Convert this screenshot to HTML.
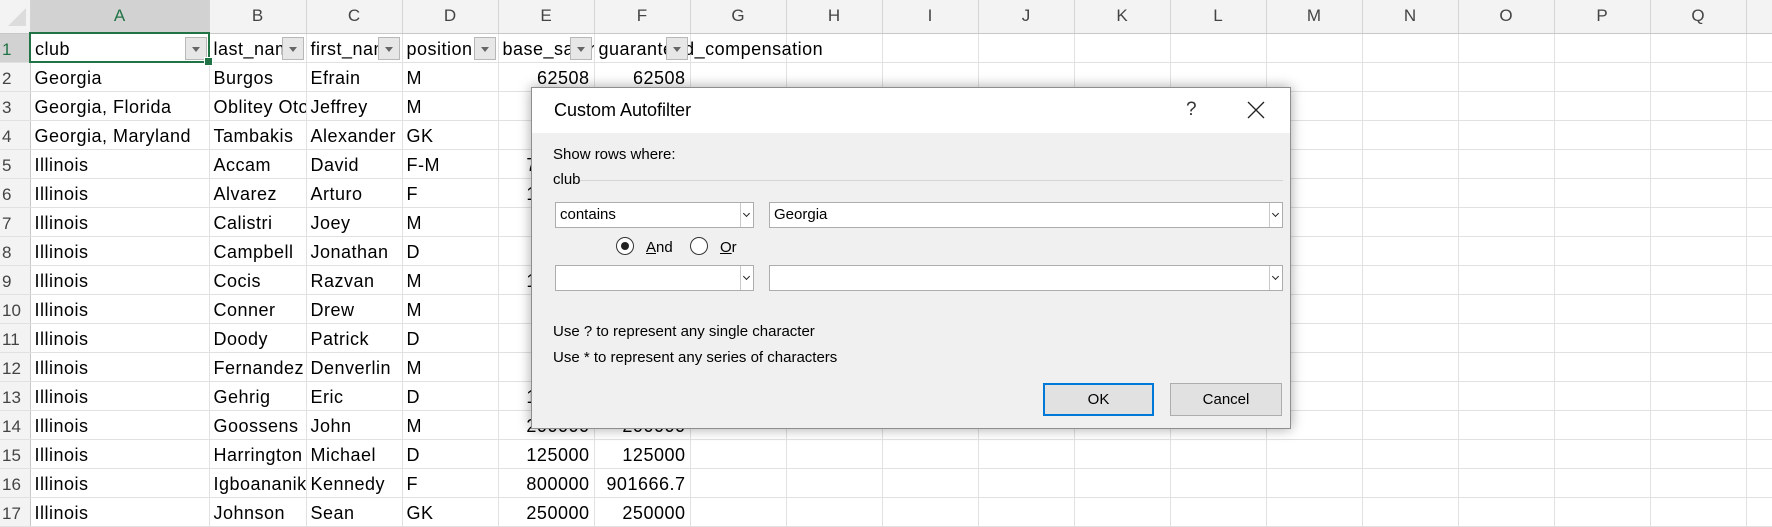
<!DOCTYPE html>
<html><head><meta charset="utf-8"><style>
*{margin:0;padding:0;box-sizing:border-box}
body{width:1772px;height:510px;overflow:hidden;background:#fff;font-family:"Liberation Sans",sans-serif;position:relative}
table{border-collapse:collapse;table-layout:fixed;position:absolute;left:0;top:0;background:#fff;width:1842px}
td{height:29px;border-right:1px solid #e1e1e1;border-bottom:1px solid #e1e1e1;white-space:nowrap;overflow:hidden;font-size:18px;letter-spacing:0.5px;padding:0 4px;color:#000;vertical-align:bottom;padding-bottom:2px;position:relative}
td.n{text-align:right}
tr.h td{height:33px;background:#f3f3f3;border-right:1px solid #d4d4d4;border-bottom:1px solid #c8c8c8;text-align:center;color:#444;font-size:17px;letter-spacing:0;vertical-align:middle;padding:0}
td.r{background:#f3f3f3;border-right:1px solid #c8c8c8;color:#444;font-size:17px;letter-spacing:0;padding:0 0 2px 2px;text-align:left}
tr.h td.sel{background:#d2d2d2;color:#217346;border-bottom:2px solid #217346}
td.rsel{background:#d2d2d2;color:#217346;border-right:2px solid #217346}
.fb{position:absolute;right:2px;top:3px;width:22px;height:23px;background:#e7e7e7;border:1px solid #b8b8b8;z-index:2}
.fb:after{content:"";position:absolute;left:6px;top:9px;border-left:4px solid transparent;border-right:4px solid transparent;border-top:5px solid #666}
.ov{overflow:visible}
.selbox{position:absolute;left:29px;top:32px;width:181px;height:31px;border:2px solid #217346;z-index:3}
.selbox:after{content:"";position:absolute;right:-5px;bottom:-5px;width:7px;height:7px;background:#217346;border:1px solid #fff}
.corner{position:absolute;left:8px;top:8px;width:0;height:0;border-left:18px solid transparent;border-bottom:18px solid #dcdcdc}
.dlg{position:absolute;left:531px;top:87px;width:760px;height:342px;background:#f0f0f0;border:1px solid #8e8e8e;box-shadow:0 0 12px rgba(0,0,0,.35);z-index:10;font-size:15px;color:#000}
.tb{height:45px;background:#fff;position:relative}
.tt{position:absolute;left:22px;top:12px;font-size:18px}
.q{position:absolute;left:654px;top:11px;font-size:19px;color:#333}
.x{position:absolute;left:715px;top:13px}
.a{position:absolute}
.cb{position:absolute;background:#fff;border:1px solid #adadad;height:26px}
.cb .dd{position:absolute;right:0;top:0;width:13px;height:100%;border-left:1px solid #c8c8c8}
.cb .dd:after{content:"";position:absolute;left:3px;top:8px;width:4px;height:4px;border-right:1.5px solid #222;border-bottom:1.5px solid #222;transform:rotate(45deg)}
.cb span{position:absolute;left:4px;top:3px}
.rad{position:absolute;width:18px;height:18px;border:1px solid #333;border-radius:50%;background:#fff}
.rad.on:after{content:"";position:absolute;left:4px;top:4px;width:8px;height:8px;border-radius:50%;background:#222}
.btn{position:absolute;height:33px;background:#e1e1e1;border:1px solid #adadad;text-align:center;line-height:31px;font-size:15px}
</style></head><body>
<table>
<colgroup><col style="width:30px"><col style="width:179px"><col style="width:97px"><col style="width:96px"><col style="width:96px"><col style="width:96px"><col style="width:96px"><col style="width:96px"><col style="width:96px"><col style="width:96px"><col style="width:96px"><col style="width:96px"><col style="width:96px"><col style="width:96px"><col style="width:96px"><col style="width:96px"><col style="width:96px"><col style="width:96px"><col style="width:96px"></colgroup>
<tr class="h"><td></td><td class="sel">A</td><td>B</td><td>C</td><td>D</td><td>E</td><td>F</td><td>G</td><td>H</td><td>I</td><td>J</td><td>K</td><td>L</td><td>M</td><td>N</td><td>O</td><td>P</td><td>Q</td><td>R</td></tr>
<tr><td class="r rsel">1</td><td>club<div class="fb"></div></td><td>last_name<div class="fb"></div></td><td>first_name<div class="fb"></div></td><td>position<div class="fb"></div></td><td>base_salary<div class="fb"></div></td><td class="ov">guaranteed_compensation<div class="fb"></div></td><td></td><td></td><td></td><td></td><td></td><td></td><td></td><td></td><td></td><td></td><td></td><td></td></tr>
<tr><td class="r">2</td><td>Georgia</td><td>Burgos</td><td>Efrain</td><td>M</td><td class="n">62508</td><td class="n">62508</td><td></td><td></td><td></td><td></td><td></td><td></td><td></td><td></td><td></td><td></td><td></td><td></td></tr>
<tr><td class="r">3</td><td>Georgia, Florida</td><td>Oblitey Otoo</td><td>Jeffrey</td><td>M</td><td class="n"></td><td class="n"></td><td></td><td></td><td></td><td></td><td></td><td></td><td></td><td></td><td></td><td></td><td></td><td></td></tr>
<tr><td class="r">4</td><td>Georgia, Maryland</td><td>Tambakis</td><td>Alexander</td><td>GK</td><td class="n"></td><td class="n"></td><td></td><td></td><td></td><td></td><td></td><td></td><td></td><td></td><td></td><td></td><td></td><td></td></tr>
<tr><td class="r">5</td><td>Illinois</td><td>Accam</td><td>David</td><td>F-M</td><td class="n">700000</td><td class="n"></td><td></td><td></td><td></td><td></td><td></td><td></td><td></td><td></td><td></td><td></td><td></td><td></td></tr>
<tr><td class="r">6</td><td>Illinois</td><td>Alvarez</td><td>Arturo</td><td>F</td><td class="n">150000</td><td class="n"></td><td></td><td></td><td></td><td></td><td></td><td></td><td></td><td></td><td></td><td></td><td></td><td></td></tr>
<tr><td class="r">7</td><td>Illinois</td><td>Calistri</td><td>Joey</td><td>M</td><td class="n"></td><td class="n"></td><td></td><td></td><td></td><td></td><td></td><td></td><td></td><td></td><td></td><td></td><td></td><td></td></tr>
<tr><td class="r">8</td><td>Illinois</td><td>Campbell</td><td>Jonathan</td><td>D</td><td class="n"></td><td class="n"></td><td></td><td></td><td></td><td></td><td></td><td></td><td></td><td></td><td></td><td></td><td></td><td></td></tr>
<tr><td class="r">9</td><td>Illinois</td><td>Cocis</td><td>Razvan</td><td>M</td><td class="n">150000</td><td class="n"></td><td></td><td></td><td></td><td></td><td></td><td></td><td></td><td></td><td></td><td></td><td></td><td></td></tr>
<tr><td class="r">10</td><td>Illinois</td><td>Conner</td><td>Drew</td><td>M</td><td class="n"></td><td class="n"></td><td></td><td></td><td></td><td></td><td></td><td></td><td></td><td></td><td></td><td></td><td></td><td></td></tr>
<tr><td class="r">11</td><td>Illinois</td><td>Doody</td><td>Patrick</td><td>D</td><td class="n"></td><td class="n"></td><td></td><td></td><td></td><td></td><td></td><td></td><td></td><td></td><td></td><td></td><td></td><td></td></tr>
<tr><td class="r">12</td><td>Illinois</td><td>Fernandez</td><td>Denverlin</td><td>M</td><td class="n"></td><td class="n"></td><td></td><td></td><td></td><td></td><td></td><td></td><td></td><td></td><td></td><td></td><td></td><td></td></tr>
<tr><td class="r">13</td><td>Illinois</td><td>Gehrig</td><td>Eric</td><td>D</td><td class="n">100000</td><td class="n"></td><td></td><td></td><td></td><td></td><td></td><td></td><td></td><td></td><td></td><td></td><td></td><td></td></tr>
<tr><td class="r">14</td><td>Illinois</td><td>Goossens</td><td>John</td><td>M</td><td class="n">200000</td><td class="n">200000</td><td></td><td></td><td></td><td></td><td></td><td></td><td></td><td></td><td></td><td></td><td></td><td></td></tr>
<tr><td class="r">15</td><td>Illinois</td><td>Harrington</td><td>Michael</td><td>D</td><td class="n">125000</td><td class="n">125000</td><td></td><td></td><td></td><td></td><td></td><td></td><td></td><td></td><td></td><td></td><td></td><td></td></tr>
<tr><td class="r">16</td><td>Illinois</td><td>Igboananike</td><td>Kennedy</td><td>F</td><td class="n">800000</td><td class="n">901666.7</td><td></td><td></td><td></td><td></td><td></td><td></td><td></td><td></td><td></td><td></td><td></td><td></td></tr>
<tr><td class="r">17</td><td>Illinois</td><td>Johnson</td><td>Sean</td><td>GK</td><td class="n">250000</td><td class="n">250000</td><td></td><td></td><td></td><td></td><td></td><td></td><td></td><td></td><td></td><td></td><td></td><td></td></tr>
</table>
<div class="corner"></div>
<div class="selbox"></div>

<div class="dlg">
 <div class="tb"><div class="tt">Custom Autofilter</div><div class="q">?</div>
  <svg class="x" width="18" height="18" viewBox="0 0 18 18"><path d="M1 1L17 17M17 1L1 17" stroke="#222" stroke-width="1.3"/></svg></div>
 <div class="a" style="left:21px;top:58px">Show rows where:</div>
 <div class="a" style="left:21px;top:83px">club</div>
 <div class="a" style="left:48px;top:92px;width:703px;height:1px;background:#d5d5d5"></div>
 <div class="cb" style="left:23px;top:114px;width:199px"><span>contains</span><div class="dd"></div></div>
 <div class="cb" style="left:237px;top:114px;width:514px"><span>Georgia</span><div class="dd"></div></div>
 <div class="rad on" style="left:84px;top:149px"></div>
 <div class="a" style="left:114px;top:151px"><u>A</u>nd</div>
 <div class="rad" style="left:158px;top:149px"></div>
 <div class="a" style="left:188px;top:151px"><u>O</u>r</div>
 <div class="cb" style="left:23px;top:177px;width:199px"><div class="dd"></div></div>
 <div class="cb" style="left:237px;top:177px;width:514px"><div class="dd"></div></div>
 <div class="a" style="left:21px;top:235px">Use ? to represent any single character</div>
 <div class="a" style="left:21px;top:261px">Use * to represent any series of characters</div>
 <div class="btn" style="left:511px;top:295px;width:111px;border:2px solid #0078d7;line-height:29px">OK</div>
 <div class="btn" style="left:638px;top:295px;width:112px">Cancel</div>
</div>
</body></html>
